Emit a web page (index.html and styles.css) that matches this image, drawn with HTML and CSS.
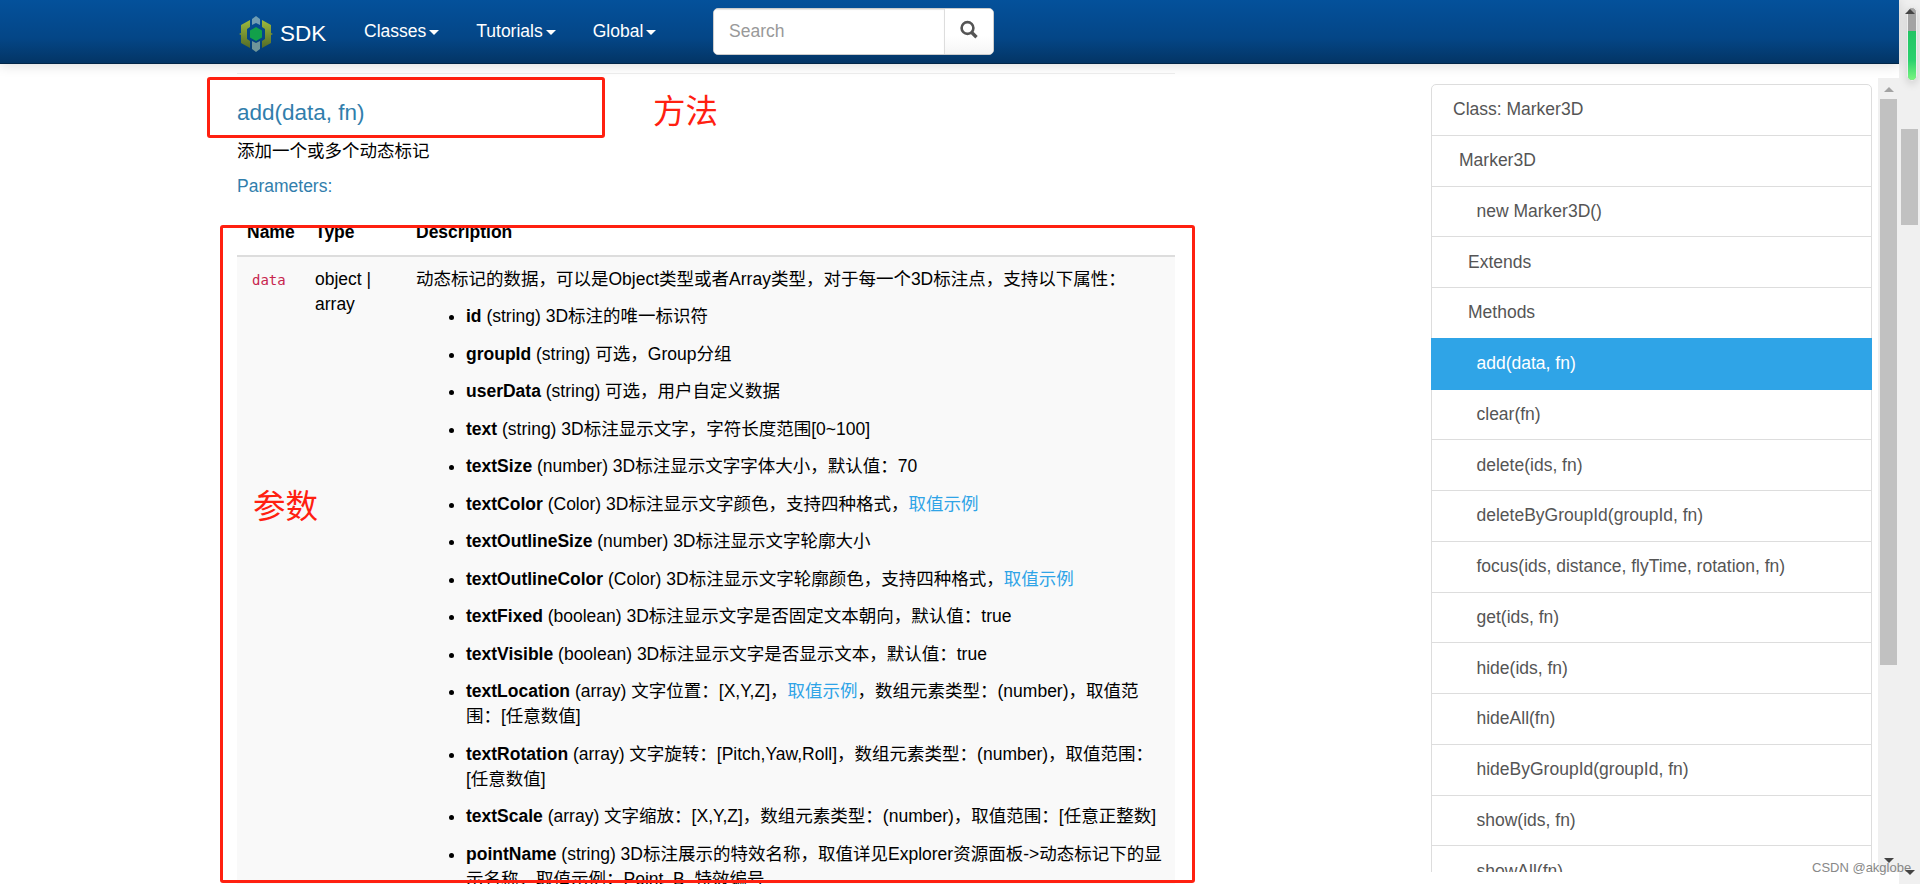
FILE: index.html
```html
<!DOCTYPE html>
<html lang="zh">
<head>
    <meta charset="UTF-8">
    <title>SDK Class: Marker3D</title>
    <link rel="stylesheet" href="styles.css">
</head>
<body>
    <div class="page">
        <header class="navbar">
            <a class="brand">
                <svg class="logo" width="34" height="36" viewBox="0 0 34 36">
                    <defs>
                        <linearGradient id="olive" x1="0" y1="0" x2="0" y2="1">
                            <stop offset="0" stop-color="#9dba3c"/>
                            <stop offset="1" stop-color="#536b28"/>
                        </linearGradient>
                    </defs>
                    <path d="M13 3l4-3 4 3v6l-4-2-4 2z" fill="#6f9db3"/>
                    <path d="M13 33l4 3 4-3v-8l-4 2-4-2z" fill="#6f9599"/>
                    <path d="M11 4v7l-3 2v10l3 2v7l-9-5v-8l-2-1 2-1V9z" fill="url(#olive)"/>
                    <path d="M23 4v7l3 2v10l-3 2v7l9-5v-8l2-1-2-1V9z" fill="url(#olive)"/>
                    <path d="M17 11l6 3.500v7L17 25l-6-3.500v-7z" fill="#12a04a"/>
                </svg>
                <span>SDK</span>
            </a>
            <nav class="menu">
                <a>Classes<b class="caret"></b></a>
                <a>Tutorials<b class="caret"></b></a>
                <a>Global<b class="caret"></b></a>
            </nav>
            <form class="search">
                <input type="text" placeholder="Search">
                <button type="button">
                    <svg width="20" height="20" viewBox="0 0 18 20">
                        <circle cx="7.500" cy="8" r="5.900" fill="none" stroke="#555" stroke-width="2.600"/>
                        <path d="M11.500 12.300l5 5" stroke="#555" stroke-width="3.400"/>
                    </svg>
                </button>
            </form>
        </header>

        <div class="content">
            <main>
                <hr>
                <h4>add(data, fn)</h4>
                <p class="summary">添加一个或多个动态标记</p>
                <h5>Parameters:</h5>
                <table class="params">
                    <thead>
                        <tr><th class="col-name">Name</th><th class="col-type">Type</th><th>Description</th></tr>
                    </thead>
                    <tbody>
                        <tr>
                            <td><code>data</code></td>
                            <td>object | array</td>
                            <td>
                                <p>动态标记的数据，可以是Object类型或者Array类型，对于每一个3D标注点，支持以下属性：</p>
                                <ul>
                                    <li><b>id</b> (string) 3D标注的唯一标识符</li>
                                    <li><b>groupId</b> (string) 可选，Group分组</li>
                                    <li><b>userData</b> (string) 可选，用户自定义数据</li>
                                    <li><b>text</b> (string) 3D标注显示文字，字符长度范围[0~100]</li>
                                    <li><b>textSize</b> (number) 3D标注显示文字字体大小，默认值：70</li>
                                    <li><b>textColor</b> (Color) 3D标注显示文字颜色，支持四种格式，<a>取值示例</a></li>
                                    <li><b>textOutlineSize</b> (number) 3D标注显示文字轮廓大小</li>
                                    <li><b>textOutlineColor</b> (Color) 3D标注显示文字轮廓颜色，支持四种格式，<a>取值示例</a></li>
                                    <li><b>textFixed</b> (boolean) 3D标注显示文字是否固定文本朝向，默认值：true</li>
                                    <li><b>textVisible</b> (boolean) 3D标注显示文字是否显示文本，默认值：true</li>
                                    <li><b>textLocation</b> (array) 文字位置：[X,Y,Z]，<a>取值示例</a>，数组元素类型：(number)，取值范围：[任意数值]</li>
                                    <li><b>textRotation</b> (array) 文字旋转：[Pitch,Yaw,Roll]，数组元素类型：(number)，取值范围：[任意数值]</li>
                                    <li><b>textScale</b> (array) 文字缩放：[X,Y,Z]，数组元素类型：(number)，取值范围：[任意正整数]</li>
                                    <li><b>pointName</b> (string) 3D标注展示的特效名称，取值详见Explorer资源面板-&gt;动态标记下的显示名称，取值示例：Point_B_特效编号</li>
                                </ul>
                            </td>
                        </tr>
                    </tbody>
                </table>
            </main>

            <aside class="toc">
                <ul class="toc-list">
                    <li>Class: Marker3D</li>
                    <li class="level-1">Marker3D</li>
                    <li class="level-3">new Marker3D()</li>
                    <li class="level-2">Extends</li>
                    <li class="level-2">Methods</li>
                    <li class="level-3 active">add(data, fn)</li>
                    <li class="level-3">clear(fn)</li>
                    <li class="level-3">delete(ids, fn)</li>
                    <li class="level-3">deleteByGroupId(groupId, fn)</li>
                    <li class="level-3">focus(ids, distance, flyTime, rotation, fn)</li>
                    <li class="level-3">get(ids, fn)</li>
                    <li class="level-3">hide(ids, fn)</li>
                    <li class="level-3">hideAll(fn)</li>
                    <li class="level-3">hideByGroupId(groupId, fn)</li>
                    <li class="level-3">show(ids, fn)</li>
                    <li class="level-3">showAll(fn)</li>
                </ul>
                <div class="scrollbar toc-scrollbar">
                    <i class="arrow up light"></i>
                    <div class="thumb"></div>
                    <i class="arrow down"></i>
                </div>
            </aside>
        </div>
    </div>

    <div class="scrollbar page-scrollbar">
        <i class="arrow up"></i>
        <div class="thumb"></div>
        <i class="arrow down"></i>
    </div>

    <!-- Notes over the page -->
    <div class="meter"><div class="meter-fill"></div></div>
    <div class="mark mark-method"></div>
    <div class="mark mark-params"></div>
    <span class="note note-method">方法</span>
    <span class="note note-params">参数</span>
    <span class="watermark">CSDN @akglobe</span>
</body>
</html>
```
FILE: styles.css
```css
* {
    box-sizing: border-box;
}

body {
    display: flex;
    position: relative;
    width: 1920px;
    height: 884px;
    margin: 0;
    overflow: hidden;
    background: #fff;
    color: #000;
    font-family: "Liberation Sans", Arial, "Noto Sans CJK SC", sans-serif;
    font-size: 17.5px;
    line-height: 25px;
}

b, th {
    font-weight: bold;
}

.page {
    width: 1899px;
    height: 884px;
}

/* Navbar */
.navbar {
    display: flex;
    position: relative;
    height: 64px;
    padding-left: 239px;
    color: #fff;
    background: linear-gradient(#04519b, #044687 60%, #033565);
    border-bottom: 1px solid #022648;
    box-shadow: 0 1px 12px rgba(0, 0, 0, 0.15);
}

.brand {
    display: flex;
    width: 125px;
    padding-top: 16px;
    gap: 7px;
    font-size: 22.5px;
    line-height: 36px;
    text-shadow: 0 1px 0 rgba(0, 0, 0, 0.1);
}

.menu {
    display: flex;
    width: 349px;
    padding-top: 19px;
    gap: 37px;
}

.caret {
    display: inline-block;
    margin-left: 3px;
    vertical-align: middle;
    border-top: 5px solid #fff;
    border-left: 5px solid transparent;
    border-right: 5px solid transparent;
}

.search {
    display: flex;
    width: 281px;
    height: 47px;
    margin-top: 8px;
    border: 1px solid #ccc;
    border-radius: 5px;
    background: #fff;
    overflow: hidden;
}

.search input {
    width: 231px;
    padding: 0 15px;
    border: 0;
    border-right: 1px solid #ddd;
    font: inherit;
    box-shadow: inset 0 1px 1px rgba(0, 0, 0, 0.1);
}

.search input::placeholder {
    color: #999;
}

.search button {
    flex: 1;
    padding: 0 0 4px;
    border: 0;
    background: linear-gradient(#fff 60%, #f5f5f5);
}

.search svg {
    vertical-align: middle;
}

/* Documentation */
.content {
    display: flex;
    height: 820px;
    overflow: hidden;
}

main {
    width: 938px;
    margin-left: 237px;
    padding-top: 9px;
}

hr {
    margin: 0;
    border: 0;
    border-top: 1px solid #eee;
}

h4, h5 {
    margin: 0;
    color: #317eac;
    font-weight: normal;
}

h4 {
    padding-top: 26px;
    font-size: 22.5px;
}

.summary {
    margin: 14px 0 0;
}

h5 {
    margin-top: 10px;
    font-size: 17.5px;
}

.params {
    width: 938px;
    margin-top: 10px;
    border-collapse: separate;
    border-spacing: 0;
    table-layout: fixed;
}

.params th {
    height: 48px;
    padding: 0 10px 10px;
    border-bottom: 2px solid #ddd;
    text-align: left;
    vertical-align: bottom;
}

.params td {
    padding: 10px;
    background: #f9f9f9;
    vertical-align: top;
}

.col-name {
    width: 68px;
}

.col-type {
    width: 101px;
}

.params p {
    margin: 0 0 12px;
}

.params ul {
    margin: 0;
    padding-left: 50px;
}

.params li {
    margin-bottom: 12.5px;
}

.params a {
    color: #2fa4e7;
}

code {
    padding-left: 5px;
    color: #c7254e;
    font-family: "DejaVu Sans Mono", monospace;
    font-size: 14px;
}

/* Table of contents */
.toc {
    display: flex;
    width: 468px;
    height: 794px;
    margin: 14px 0 0 auto;
    overflow: hidden;
}

.toc-list {
    width: 441px;
    height: 900px;
    margin: 6px 6px 0 0;
    padding: 0;
    list-style: none;
    border: 1px solid #ddd;
    border-radius: 5px;
    color: #555;
}

.toc-list li {
    height: 50.75px;
    padding: 12.4px 21px;
    border-bottom: 1px solid #ddd;
}

.toc-list .level-1 {
    padding-left: 27px;
}

.toc-list .level-2 {
    padding-left: 36px;
}

.toc-list .level-3 {
    padding-left: 44.5px;
}

.toc-list .active {
    height: 51.75px;
    margin: -1px -1px 0;
    padding-top: 13.4px;
    padding-left: 45.5px;
    color: #fff;
    background: #2fa4e7;
    border-color: #2fa4e7;
}

/* Scrollbars */
.scrollbar {
    display: flex;
    flex-direction: column;
    align-items: center;
    width: 21px;
    padding: 9px 0;
    background: #f0f0f0;
}

.thumb {
    width: 17px;
    background: #c1c1c1;
}

.arrow {
    border-left: 5px solid transparent;
    border-right: 5px solid transparent;
}

.up {
    border-bottom: 5px solid #444;
}

.light {
    border-bottom-color: #a3a3a3;
}

.down {
    margin-top: auto;
    border-top: 5px solid #444;
}

.toc-scrollbar .thumb {
    height: 566px;
    margin-top: 7px;
}

.page-scrollbar .arrow {
    position: relative;
    z-index: 2;
}

.page-scrollbar .thumb {
    height: 96px;
    margin-top: 115px;
}

/* Overlays */
.meter {
    position: absolute;
    left: 1907px;
    top: 7px;
    width: 10px;
    height: 74px;
    border: 1px solid #eee;
    border-radius: 5px;
    background: #a3a3a3;
    box-shadow: 0 3px 8px rgba(0, 0, 0, 0.15);
    overflow: hidden;
}

.meter-fill {
    height: 49px;
    margin-top: 23px;
    background: linear-gradient(#23c464, #2bd16e 60%, #7bf580);
}

.mark {
    position: absolute;
    border: 3px solid #ff2010;
    border-radius: 3px;
}

.mark-method {
    left: 207px;
    top: 77px;
    width: 398px;
    height: 61px;
}

.mark-params {
    left: 220px;
    top: 225px;
    width: 975px;
    height: 658px;
}

.note {
    position: absolute;
    color: #ff2010;
    font-size: 32.5px;
    line-height: 40px;
}

.note-method {
    left: 653px;
    top: 92px;
}

.note-params {
    left: 253px;
    top: 487px;
}

.watermark {
    position: absolute;
    left: 1812px;
    top: 856px;
    color: #888;
    font-size: 13px;
    line-height: 24px;
    white-space: nowrap;
}
```
